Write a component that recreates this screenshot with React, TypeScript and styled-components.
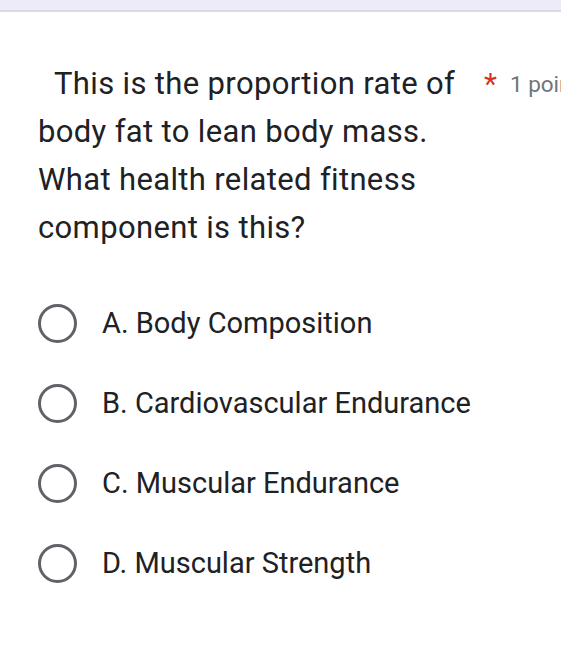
import React from "react";
import styled, { createGlobalStyle } from "styled-components";

const Global = createGlobalStyle`
  html, body { margin: 0; padding: 0; background: #ffffff; overflow: hidden; }
  body { font-family: Roboto, "Noto Sans", sans-serif; }
`;

const Page = styled.div`
  width: 561px;
  height: 648px;
  overflow: hidden;
  display: flex;
  flex-direction: column;
  background: #ffffff;
`;

const TopBand = styled.div`
  height: 10px;
  background: #eeebf8;
  border-bottom: 2px solid #dcd9e6;
  flex: none;
`;

const Card = styled.div`
  padding: 48px 0 0 38px;
  display: flex;
  flex-direction: column;
`;

const Header = styled.div`
  display: flex;
  align-items: flex-start;
  white-space: nowrap;
`;

const Question = styled.div`
  width: 440px;
  flex: none;
  white-space: normal;
  font-size: 31px;
  line-height: 48px;
  color: #202124;
  text-indent: 16px;
  letter-spacing: 0.35px;
`;

const Required = styled.span`
  color: #d93025;
  font-size: 30px;
  line-height: 48px;
  margin-left: 6px;
`;

const Points = styled.span`
  color: #70757a;
  font-size: 22.5px;
  line-height: 48px;
  margin-left: 13px;
`;

const Options = styled.div`
  display: flex;
  flex-direction: column;
  margin-top: 31px;
`;

const Option = styled.label`
  display: flex;
  align-items: center;
  height: 80px;
  gap: 25px;
`;

const Radio = styled.span`
  width: 39px;
  height: 39px;
  box-sizing: border-box;
  border: 3.3px solid #5f6368;
  border-radius: 50%;
  flex: none;
`;

const OptionText = styled.span`
  font-size: 29px;
  color: #202124;
  white-space: nowrap;
`;

const options = [
  "A. Body Composition",
  "B. Cardiovascular Endurance",
  "C. Muscular Endurance",
  "D. Muscular Strength",
];

export default function App() {
  return (
    <Page>
      <Global />
      <TopBand />
      <Card>
        <Header>
          <Question>
            This is the proportion rate of body fat to lean body mass. What
            health related fitness component is this?
          </Question>
          <Required>*</Required>
          <Points>1 point</Points>
        </Header>
        <Options>
          {options.map((o) => (
            <Option key={o}>
              <Radio />
              <OptionText>{o}</OptionText>
            </Option>
          ))}
        </Options>
      </Card>
    </Page>
  );
}
